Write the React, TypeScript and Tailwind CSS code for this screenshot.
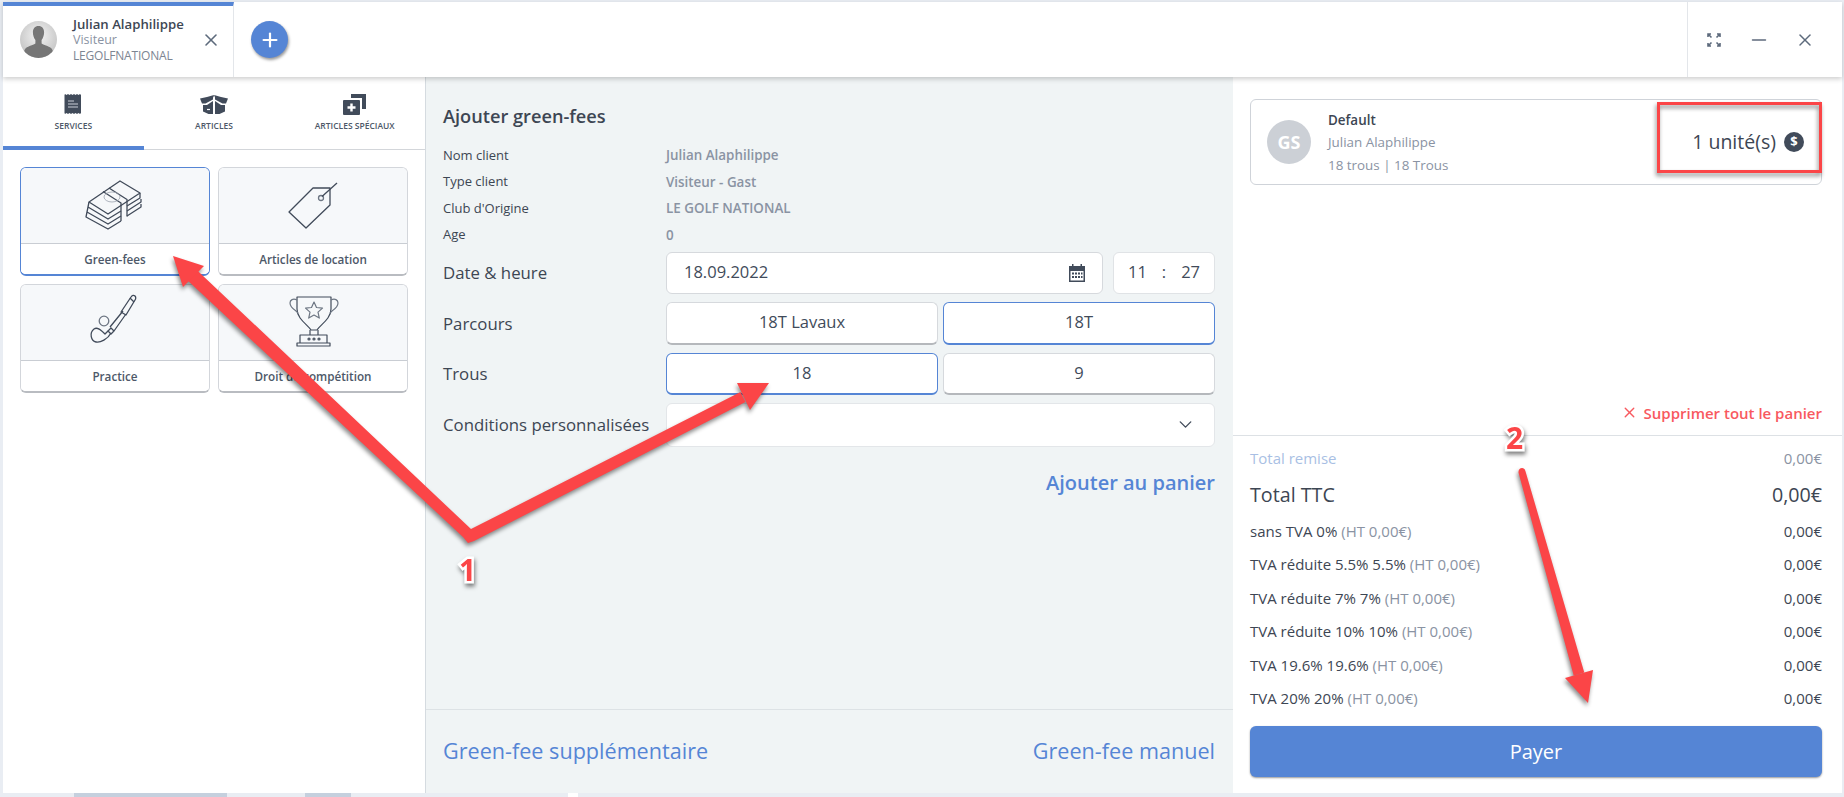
import { ChevronDown, Minus, Plus, X } from "lucide-react";

const taxRows = [
  { label: "sans TVA 0%", ht: "(HT 0,00€)" },
  { label: "TVA réduite 5.5% 5.5%", ht: "(HT 0,00€)" },
  { label: "TVA réduite 7% 7%", ht: "(HT 0,00€)" },
  { label: "TVA réduite 10% 10%", ht: "(HT 0,00€)" },
  { label: "TVA 19.6% 19.6%", ht: "(HT 0,00€)" },
  { label: "TVA 20% 20%", ht: "(HT 0,00€)" },
];

const clientRows = [
  { label: "Nom client", value: "Julian Alaphilippe" },
  { label: "Type client", value: "Visiteur - Gast" },
  { label: "Club d'Origine", value: "LE GOLF NATIONAL" },
  { label: "Age", value: "0" },
];

function UserAvatar() {
  return (
    <svg width="37" height="37" viewBox="0 0 37 37" className="shrink-0">
      <defs>
        <radialGradient id="avatarBg" cx="50%" cy="40%" r="60%">
          <stop offset="0%" stopColor="#f4f4f4" />
          <stop offset="100%" stopColor="#c4c4c4" />
        </radialGradient>
        <clipPath id="avatarClip">
          <circle cx="18.5" cy="18.5" r="18.5" />
        </clipPath>
      </defs>
      <circle cx="18.5" cy="18.5" r="18.5" fill="url(#avatarBg)" />
      <g clipPath="url(#avatarClip)" fill="#767676">
        <path d="M18.5 5c-3.6 0-5.6 2.6-5.6 6.200 0 3 1 6 2.500 7.800v3.500c-1.500 1.600-7 2.500-9.400 4.500-1.500 1.300-2 3-2 5v6h29v-6c0-2-.5-3.700-2-5-2.400-2-7.900-2.900-9.400-4.500V19c1.500-1.800 2.500-4.800 2.500-7.800 0-3.600-2-6.200-5.600-6.200z" />
      </g>
    </svg>
  );
}

function ReceiptIcon() {
  return (
    <svg width="18" height="22" viewBox="0 0 18 22">
      <path
        fill="#414b5a"
        d="M1 1l1.500 1L4 1l1.500 1L7 1l1.500 1L10 1l1.500 1L13 1l1.500 1L16 1l1 1v18l-1 1-1.500-1-1.500 1-1.500-1-1.500 1-1.500-1L7 21l-1.500-1L4 21l-1.500-1L1 21l-.5-1V2z"
      />
      <path stroke="#c9ced6" strokeWidth="1.200" d="M4 8h6M4 11h10M4 14h10" />
    </svg>
  );
}

function BoxIcon() {
  return (
    <svg width="28" height="19" viewBox="0 0 28 19">
      <path fill="#414b5a" d="M14 0L7 2 0 3.500 2 8.500h3.500L13 4.500V2.500l.5-.5zM14 0l7 2 7 1.500-2 5h-3.500L15 4.500V2.500z" />
      <path fill="#414b5a" d="M3 10h4l6-4v13H8.500L3 16.500zM25 10h-4l-6-4v13h4.500l5.500-2.500z" />
      <path stroke="#f9fafb" strokeWidth="1.200" d="M7 14.500h3" />
    </svg>
  );
}

function SpecialIcon() {
  return (
    <svg width="23" height="21" viewBox="0 0 23 21">
      <path fill="#414b5a" d="M8 0h15v15h-4V4H8z" />
      <rect x="0" y="6" width="17" height="15" rx="1" fill="#414b5a" />
      <path stroke="#fff" strokeWidth="2.400" d="M4.500 13.500h8M8.500 9.500v8" />
    </svg>
  );
}

function MoneyIcon() {
  return (
    <svg width="90" height="70" viewBox="0 0 90 70" fill="none" stroke="#414b5a" strokeWidth="1.300" strokeLinejoin="round">
      <path d="M50 11l20 12-32 21-19-12z" />
      <path d="M33 21.500l18 11.500v18M39 18l18 11.500v17" />
      <path d="M19 32l-1 5 20 12 13-8M57 36l13-8v-5M18 37l-1 5 21 12 13-8M57 41l14-9v-3M17 42l-1 5 22 12 13-8M57 46l14-9v-3" />
      <ellipse cx="42" cy="27" rx="8" ry="5" stroke="#9aa2ad" strokeWidth="0.800" />
    </svg>
  );
}

function TagIcon() {
  return (
    <svg width="90" height="70" viewBox="0 0 90 70" fill="none" stroke="#414b5a" strokeWidth="1.300" strokeLinejoin="round">
      <path d="M45 18h17v17L38 58 21 42z" />
      <circle cx="53" cy="28" r="2.500" stroke="#6d7683" />
      <path d="M54 26.500L69 13" />
    </svg>
  );
}

function ClubIcon() {
  return (
    <svg width="90" height="70" viewBox="0 0 90 70" fill="none" stroke="#414b5a" strokeWidth="1.300" strokeLinejoin="round">
      <circle cx="34" cy="34" r="4.800" stroke="#6d7683" />
      <path d="M41 46c-3 6-11 10-15 9-5-1-7-9-2-13 3-2 6 0 11 5l3-3" />
      <path d="M38 44l3 3 3-3-3-3zM40 40l13-16M44 44l12-17" />
      <path d="M51 25l10-15c1-2 3-2 4-1s1 3 0 4L56 28z" />
      <path d="M60 11l4 4" />
    </svg>
  );
}

function TrophyIcon() {
  return (
    <svg width="90" height="70" viewBox="0 0 90 70" fill="none" stroke="#414b5a" strokeWidth="1.200" strokeLinejoin="round">
      <path d="M29 10h34v12c0 10-11 16-14 21h-6c-3-5-14-11-14-21z" />
      <path d="M46 15l2.500 5.500 6 .6-4.500 4 1.300 6-5.300-3.100-5.300 3.100 1.300-6-4.500-4 6-.6z" stroke="#6d7683" />
      <path d="M29 13c-4-2-7 0-7 3s3 6 6 8l2 2M63 13c4-2 7 0 7 3s-3 6-6 8l-2 2" stroke="#6d7683" />
      <path d="M42 43v5M50 43v5M32 48h27v8H32zM29 56h33v3H29z" />
      <circle cx="41" cy="52" r="1" />
      <circle cx="46" cy="52" r="1" />
      <circle cx="51" cy="52" r="1" />
    </svg>
  );
}

function CalendarIcon() {
  return (
    <svg width="20" height="20" viewBox="0 0 20 20">
      <path fill="#414b5a" d="M2 3h3V1h1.500v2h7V1H15v2h3v16H2zm1.500 5v9.500h13V8z" />
      <g fill="#414b5a">
        <rect x="5" y="9.500" width="2" height="2" />
        <rect x="8" y="9.500" width="2" height="2" />
        <rect x="11" y="9.500" width="2" height="2" />
        <rect x="14" y="9.500" width="1.500" height="2" />
        <rect x="5" y="13" width="2" height="2" />
        <rect x="8" y="13" width="2" height="2" />
        <rect x="11" y="13" width="2" height="2" />
        <rect x="14" y="13" width="1.500" height="2" />
      </g>
    </svg>
  );
}

function ExpandIcon() {
  return (
    <svg width="14" height="14" viewBox="0 0 14 14" fill="none" stroke="#5d6a7c" strokeWidth="1.600">
      <path d="M1 4V1h3M1 1l3.500 3.500M13 4V1h-3M13 1L9.500 4.500M1 10v3h3M1 13l3.500-3.500M13 10v3h-3M13 13L9.500 9.500" />
    </svg>
  );
}

function Tile({ label, selected, children }: { label: string; selected?: boolean; children: React.ReactNode }) {
  return (
    <div
      className={`flex h-[109px] flex-col overflow-hidden rounded-md border border-b-2 ${
        selected ? "border-[#5585d5]" : "border-[#d3d6db] border-b-[#b9bcc1]"
      }`}
    >
      <div className="flex h-[76px] shrink-0 items-start justify-center border-b border-[#c9cdd3] bg-[#f6f8fa] pt-[2px]">
        {children}
      </div>
      <div className="flex flex-1 items-center justify-center bg-white pt-[1px] text-[11.7px] font-semibold text-[#4d5868]">
        {label}
      </div>
    </div>
  );
}

function ChoiceButton({ label, selected }: { label: string; selected?: boolean }) {
  return (
    <div
      className={`flex items-center justify-center rounded-md border border-b-2 bg-white text-[16.5px] text-[#414b5a] ${
        selected ? "border-[#5585d5]" : "border-[#d6d9dd] border-b-[#b5b8bc]"
      }`}
    >
      {label}
    </div>
  );
}

function FormRow({ label, height, children }: { label: string; height: string; children: React.ReactNode }) {
  return (
    <div className={`flex items-center ${height}`}>
      <div className="w-[223px] shrink-0 text-[16.8px] whitespace-nowrap text-[#3d4653]">{label}</div>
      <div className="flex-1">{children}</div>
    </div>
  );
}

function Annotations() {
  return (
    <>
      <svg width="1844" height="797" viewBox="0 0 1844 797" fill="#fb4547" className="pointer-events-none absolute top-0 left-0 drop-shadow-[-1px_3px_2px_rgba(0,0,0,0.45)]">
        <rect x="1658.500" y="103.500" width="162" height="68" fill="none" stroke="#fb4547" strokeWidth="3" />
        <path d="M197.800 270.900L471 529L740.500 392.100L745.500 401.900L474 541L468 543L463 537L188.200 281.100Z" />
        <path d="M173 256L204 266L183 287Z" />
        <path d="M769 383L737 383L750 410Z" />
        <path d="M1525.400 471L1584.300 672.500L1573.700 675.500L1518.600 473C1517.500 468 1524 466 1525.400 471Z" />
        <path d="M1565 678L1593 670L1588 703Z" />
      </svg>
      <span className="pointer-events-none absolute top-[551px] left-[459px] font-['Open_Sans',sans-serif] text-[30px] leading-[38px] font-bold text-[#fb4547] [-webkit-text-stroke:5px_white] [paint-order:stroke_fill] drop-shadow-[1px_3px_2px_rgba(0,0,0,0.5)]">
        1
      </span>
      <span className="pointer-events-none absolute top-[419px] left-[1506px] font-['Open_Sans',sans-serif] text-[30px] leading-[38px] font-bold text-[#fb4547] [-webkit-text-stroke:5px_white] [paint-order:stroke_fill] drop-shadow-[1px_3px_2px_rgba(0,0,0,0.5)]">
        2
      </span>
    </>
  );
}

export default function App() {
  return (
    <div className="relative flex h-[797px] w-full flex-col overflow-hidden bg-[#e9edf3] pt-[2px] pr-[2px] pb-[4px] pl-[3px] font-['Open_Sans','Noto_Sans',sans-serif]">
      {/* bits of the page behind the modal */}
      <div className="absolute bottom-0 left-[74px] h-[4px] w-[153px] bg-[#c5d0de]" />
      <div className="absolute bottom-0 left-[305px] h-[4px] w-[46px] bg-[#c5d0de]" />
      <div className="absolute bottom-0 left-[568px] h-[4px] w-[10px] bg-white" />

      {/* Header */}
      <div className="relative z-10 flex h-[75px] shrink-0 bg-white shadow-[0_2px_5px_rgba(0,0,0,0.2)]">
        <div className="flex w-[231px] items-center border-t-4 border-r border-t-[#5585d5] border-r-[#e3e6ea] pb-[4px] pl-[17px]">
          <UserAvatar />
          <div className="ml-[16px] w-[128px]">
            <div className="text-[13.2px] leading-[16px] font-semibold whitespace-nowrap text-[#3d4653]">Julian Alaphilippe</div>
            <div className="text-[12.5px] leading-[16px] text-[#8a93a3]">Visiteur</div>
            <div className="text-[12px] leading-[16px] tracking-[-0.2px] text-[#7d8592]">LEGOLFNATIONAL</div>
          </div>
          <X size={20} strokeWidth={1.9} className="text-[#5d6a7c]" />
        </div>
        <div className="ml-[17px] flex items-center">
          <div className="flex h-[37px] w-[37px] items-center justify-center rounded-full bg-[#5585d5] shadow-[1px_2px_3px_rgba(0,0,0,0.4)]">
            <Plus size={22} strokeWidth={2.4} className="text-white" />
          </div>
        </div>
        <div className="ml-auto flex w-[155px] items-center gap-[29px] border-l border-[#e3e6ea] pl-[19px]">
          <ExpandIcon />
          <Minus size={22} strokeWidth={1.8} className="-mx-[2px] text-[#5d6a7c]" />
          <X size={20} strokeWidth={1.8} className="-ml-[2px] text-[#5d6a7c]" />
        </div>
      </div>

      <div className="flex min-h-0 flex-1">
        {/* Left column */}
        <div className="w-[423px] shrink-0 border-r border-[#d5dbe0] bg-white">
          <div className="grid h-[73px] grid-cols-3 border-b border-[#d3d6da] text-[8.5px] font-semibold text-[#4d5868]">
            <div className="-mb-px flex flex-col items-center border-b-4 border-[#5585d5] pt-[16px]">
              <div className="flex h-[22px] items-center"><ReceiptIcon /></div>
              <span className="mt-[5px]">SERVICES</span>
            </div>
            <div className="flex flex-col items-center pt-[16px]">
              <div className="flex h-[22px] items-center"><BoxIcon /></div>
              <span className="mt-[5px]">ARTICLES</span>
            </div>
            <div className="flex flex-col items-center pt-[16px]">
              <div className="flex h-[22px] items-center"><SpecialIcon /></div>
              <span className="mt-[5px]">ARTICLES SPÉCIAUX</span>
            </div>
          </div>
          <div className="grid w-[405px] grid-cols-2 gap-x-[8px] gap-y-[8px] pt-[17px] pl-[17px]">
            <Tile label="Green-fees" selected><MoneyIcon /></Tile>
            <Tile label="Articles de location"><TagIcon /></Tile>
            <Tile label="Practice"><ClubIcon /></Tile>
            <Tile label="Droit de compétition"><TrophyIcon /></Tile>
          </div>
        </div>

        {/* Center column */}
        <div className="flex w-[807px] shrink-0 flex-col bg-[#f0f4f5]">
          <div className="flex-1 pt-[28px] pr-[18px] pl-[17px]">
            <h2 className="text-[18.2px] leading-[22px] font-semibold text-[#3d4653]">Ajouter green-fees</h2>
            <div className="mt-[15px]">
              {clientRows.map((row) => (
                <div key={row.label} className="flex h-[26.500px] items-center">
                  <div className="w-[223px] shrink-0 text-[13px] text-[#3d4653]">{row.label}</div>
                  <div className="text-[13.4px] font-semibold text-[#8a93a3]">{row.value}</div>
                </div>
              ))}
            </div>
            <div className="mt-[3.800px] flex flex-col gap-[8px]">
              <FormRow label="Date & heure" height="h-[42px]">
                <div className="flex h-[42px] gap-[10px]">
                  <div className="flex flex-1 items-center justify-between rounded-md border border-[#d6d9dd] bg-white pr-[15px] pl-[17px] text-[16.5px] text-[#414b5a]">
                    18.09.2022
                    <CalendarIcon />
                  </div>
                  <div className="flex w-[102px] items-center justify-between rounded-md border border-[#e0e3e6] bg-white px-[14px] text-[16.5px] text-[#414b5a]">
                    <span>11</span>
                    <span>:</span>
                    <span>27</span>
                  </div>
                </div>
              </FormRow>
              <FormRow label="Parcours" height="h-[43px]">
                <div className="grid h-[43px] grid-cols-2 gap-[5px]">
                  <ChoiceButton label="18T Lavaux" />
                  <ChoiceButton label="18T" selected />
                </div>
              </FormRow>
              <FormRow label="Trous" height="h-[42px]">
                <div className="grid h-[42px] grid-cols-2 gap-[5px]">
                  <ChoiceButton label="18" selected />
                  <ChoiceButton label="9" />
                </div>
              </FormRow>
              <FormRow label="Conditions personnalisées" height="h-[44px]">
                <div className="flex h-[44px] items-center justify-end rounded-md border border-[#e3e6e9] bg-white pr-[18px]">
                  <ChevronDown size={21} strokeWidth={1.6} className="text-[#414b5a]" />
                </div>
              </FormRow>
            </div>
            <div className="mt-[24px] text-right text-[20px] leading-[24px] font-semibold text-[#5585d5]">Ajouter au panier</div>
          </div>
          <div className="flex h-[84px] shrink-0 items-center justify-between border-t border-[#dde2e5] pr-[18px] pb-[1px] pl-[17px] text-[21.6px] text-[#5585d5]">
            <span>Green-fee supplémentaire</span>
            <span>Green-fee manuel</span>
          </div>
        </div>

        {/* Right column */}
        <div className="flex min-w-0 flex-1 flex-col bg-white">
          <div className="flex flex-1 flex-col pt-[22px] pr-[20px] pl-[17px]">
            <div className="flex h-[86px] items-center rounded-md border border-[#cfd3d9] pr-[17px] pl-[16px]">
              <div className="flex h-[44px] w-[44px] items-center justify-center rounded-full bg-[#ccd0d6] text-[18px] font-bold text-white">GS</div>
              <div className="ml-[17px] pt-[2px]">
                <div className="text-[13.4px] leading-[22px] font-semibold text-[#3d4653]">Default</div>
                <div className="text-[13.4px] leading-[23px] text-[#8a93a3]">Julian Alaphilippe</div>
                <div className="text-[13.4px] leading-[23px] text-[#8a93a3]">18 trous | 18 Trous</div>
              </div>
              <div className="ml-auto flex items-center gap-[8px] text-[19.5px] text-[#3d4653]">
                1 unité(s)
                <span className="flex h-[20px] w-[20px] items-center justify-center rounded-full bg-[#414b5a] text-[13px] font-bold text-white">$</span>
              </div>
            </div>
            <div className="mt-auto flex items-center justify-end gap-[6px] pb-[11px] text-[15px] leading-[22px] font-semibold text-[#f8595f]">
              <X size={17} strokeWidth={1.9} />
              Supprimer tout le panier
            </div>
          </div>
          <div className="shrink-0 border-t border-[#dde1e5] pt-[11px] pr-[20px] pb-[16px] pl-[17px]">
            <div className="flex h-[24px] items-center justify-between text-[15px]">
              <span className="text-[#a9bfe4]">Total remise</span>
              <span className="text-[#8a93a3]">0,00€</span>
            </div>
            <div className="mt-[4px] flex h-[40px] items-center justify-between text-[19.7px] text-[#3d4653]">
              <span>Total TTC</span>
              <span>0,00€</span>
            </div>
            {taxRows.map((row) => (
              <div key={row.label} className="flex h-[33.400px] items-center justify-between text-[15px] text-[#3d4653]">
                <span>
                  {row.label} <span className="text-[#8a93a3]">{row.ht}</span>
                </span>
                <span>0,00€</span>
              </div>
            ))}
            <button className="mt-[11px] flex h-[51px] w-full items-center justify-center rounded-md bg-[#5585d5] text-[20px] text-white shadow-[0_1px_2px_rgba(0,0,0,0.4)]">
              Payer
            </button>
          </div>
        </div>
      </div>

      <Annotations />
    </div>
  );
}
